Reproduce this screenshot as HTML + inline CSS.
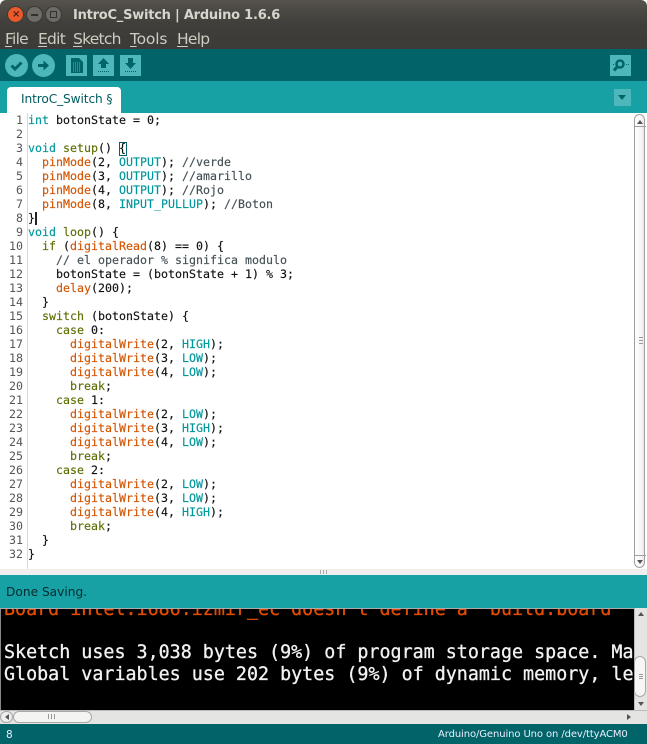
<!DOCTYPE html>
<html><head><meta charset="utf-8"><style>
html,body{margin:0;padding:0;background:#fff}
#p{position:relative;width:647px;height:744px;overflow:hidden;background:#fff}
.a{position:absolute}
.code{position:absolute;left:28px;top:113px;font:11.63px/14px "DejaVu Sans Mono",monospace;color:#111;white-space:pre;margin:0;-webkit-text-stroke:.15px currentColor}
.nums{position:absolute;left:0;top:113px;width:23px;text-align:right;font:11.63px/14px "DejaVu Sans Mono",monospace;color:#555;white-space:pre;margin:0}
.k{color:#00979c}.o{color:#d35400}.t{color:#5e6d03}.c{color:#434f54}
.menu span{position:absolute;top:30px;font:15.5px/18px "DejaVu Sans",sans-serif;color:#cfccc2;letter-spacing:-.75px}
.menu u{text-decoration-thickness:1px;text-underline-offset:2px}
.con{position:absolute;left:4px;font:18.35px/22px "DejaVu Sans Mono",monospace;white-space:pre;color:#f2f2f2;-webkit-text-stroke:.3px currentColor}
</style></head><body><div id="p">
<div class="a" style="left:0;top:0;width:647px;height:49px;background:linear-gradient(#55524b,#3f3e3a 50%,#3c3b37);border-radius:6px 6px 0 0"></div>
<div class="a" style="left:8px;top:7px;width:15px;height:15px;border-radius:50%;background:#e9592c;box-shadow:0 0 0 1px #3a3935"></div>
<div class="a" style="left:12px;top:9px;color:#4a2015;font:bold 10px/11px 'DejaVu Sans',sans-serif">×</div>
<div class="a" style="left:27px;top:7px;width:15px;height:15px;border-radius:50%;background:#6d6b65;box-shadow:0 0 0 1px #3a3935"></div>
<div class="a" style="left:31px;top:14px;width:7px;height:2px;background:#33322f"></div>
<div class="a" style="left:46px;top:7px;width:15px;height:15px;border-radius:50%;background:#6d6b65;box-shadow:0 0 0 1px #3a3935"></div>
<div class="a" style="left:50px;top:11px;width:5px;height:5px;border:1px solid #33322f"></div>
<div class="a" style="left:73px;top:7px;font:bold 13px/17px 'DejaVu Sans',sans-serif;color:#d8d5cc;white-space:pre;letter-spacing:-.23px">IntroC_Switch | Arduino 1.6.6</div>
<div class="menu">
<span style="left:5px"><u>F</u>ile</span><span style="left:38px"><u>E</u>dit</span><span style="left:73px"><u>S</u>ketch</span><span style="left:130px;letter-spacing:-.2px"><u>T</u>ools</span><span style="left:177px"><u>H</u>elp</span>
</div>
<div class="a" style="left:0;top:49px;width:647px;height:32px;background:#006468"></div>
<div class="a" style="left:0;top:81px;width:647px;height:32px;background:#17a1a5"></div>
<svg class="a" style="left:0;top:49px" width="647" height="32" viewBox="0 0 647 32">
<circle cx="16.500" cy="16.500" r="11.500" fill="#4db7bb"/>
<path d="M11.500 16.500l3.500 3.500 6.500-6.500" fill="none" stroke="#006468" stroke-width="3"/>
<circle cx="43.500" cy="16.500" r="11.500" fill="#4db7bb"/>
<path d="M38 15h5.500v-3.500l5.500 5-5.500 5V18H38z" fill="#006468"/>
<rect x="66" y="6" width="21" height="21" fill="#4db7bb"/>
<path d="M71 9h8l4 4v11H71z" fill="#006468"/>
<path d="M73 14h7M73 16h8M73 18h8M73 20h8M73 22h8" stroke="#4db7bb" stroke-dasharray="1 1" stroke-width="1"/>
<rect x="93" y="6" width="21" height="21" fill="#4db7bb"/>
<path d="M103.500 9l5.500 6h-3v4h-5v-4h-3z" fill="#006468"/>
<path d="M98 22.500h11" stroke="#006468" stroke-dasharray="1 1"/>
<rect x="120" y="6" width="21" height="21" fill="#4db7bb"/>
<path d="M128 9h5v5h3l-5.500 6-5.500-6h3z" fill="#006468"/>
<path d="M125 22.500h11" stroke="#006468" stroke-dasharray="1 1"/>
<rect x="610" y="6" width="21" height="21" fill="#4db7bb"/>
<circle cx="620" cy="15" r="3.500" fill="none" stroke="#006468" stroke-width="2.500"/>
<path d="M617 18l-3 3.500" stroke="#006468" stroke-width="3"/>
<path d="M613 15.500h1M626 15.500h1M628 15.500h1" stroke="#006468"/>
</svg>
<div class="a" style="left:7px;top:87px;width:114px;height:26px;background:#fff;border-radius:4px 4px 0 0"></div>
<div class="a" style="left:21px;top:91px;font:12.2px/16px 'DejaVu Sans',sans-serif;color:#005c5f;white-space:pre;letter-spacing:-.12px">IntroC_Switch §</div>
<div class="a" style="left:614px;top:89px;width:17px;height:17px;background:#4db7bb"></div>
<div class="a" style="left:618px;top:95px;width:0;height:0;border:4.500px solid transparent;border-top:5px solid #006468;border-bottom:0"></div>
<div class="a" style="left:27px;top:113px;width:1px;height:456px;background:#d8d8d8"></div>
<pre class="nums">1
2
3
4
5
6
7
8
9
10
11
12
13
14
15
16
17
18
19
20
21
22
23
24
25
26
27
28
29
30
31
32</pre>
<div class="a" style="left:119px;top:142px;width:6px;height:12px;border:1px solid #006468"></div>
<div class="a" style="left:35px;top:212px;width:1px;height:13px;background:#222;box-shadow:1px 0 0 #222"></div>
<pre class="code"><span class="k">int</span> botonState = 0;

<span class="k">void</span> <span class="t">setup</span>() {
  <span class="o">pinMode</span>(2, <span class="k">OUTPUT</span>); <span class="c">//verde</span>
  <span class="o">pinMode</span>(3, <span class="k">OUTPUT</span>); <span class="c">//amarillo</span>
  <span class="o">pinMode</span>(4, <span class="k">OUTPUT</span>); <span class="c">//Rojo</span>
  <span class="o">pinMode</span>(8, <span class="k">INPUT_PULLUP</span>); <span class="c">//Boton</span>
}
<span class="k">void</span> <span class="t">loop</span>() {
  <span class="t">if</span> (<span class="o">digitalRead</span>(8) == 0) {
    <span class="c">// el operador % significa modulo</span>
    botonState = (botonState + 1) % 3;
    <span class="o">delay</span>(200);
  }
  <span class="t">switch</span> (botonState) {
    <span class="t">case</span> 0:
      <span class="o">digitalWrite</span>(2, <span class="k">HIGH</span>);
      <span class="o">digitalWrite</span>(3, <span class="k">LOW</span>);
      <span class="o">digitalWrite</span>(4, <span class="k">LOW</span>);
      <span class="t">break</span>;
    <span class="t">case</span> 1:
      <span class="o">digitalWrite</span>(2, <span class="k">LOW</span>);
      <span class="o">digitalWrite</span>(3, <span class="k">HIGH</span>);
      <span class="o">digitalWrite</span>(4, <span class="k">LOW</span>);
      <span class="t">break</span>;
    <span class="t">case</span> 2:
      <span class="o">digitalWrite</span>(2, <span class="k">LOW</span>);
      <span class="o">digitalWrite</span>(3, <span class="k">LOW</span>);
      <span class="o">digitalWrite</span>(4, <span class="k">HIGH</span>);
      <span class="t">break</span>;
  }
}</pre>
<div class="a" style="left:634px;top:113px;width:13px;height:456px;background:#fff"></div>
<div class="a" style="left:634px;top:114px;width:11px;height:454px;border:1px solid #a0a0a0;border-radius:6px;box-sizing:border-box;background:linear-gradient(90deg,#fff,#f6f6f6 70%,#e6e6e6)"></div>
<div class="a" style="left:637px;top:120px;width:0;height:0;border:3px solid transparent;border-bottom:4px solid #555;border-top:0"></div>
<div class="a" style="left:634px;top:126px;width:12px;height:1px;background:#a0a0a0"></div>
<div class="a" style="left:634px;top:555px;width:12px;height:1px;background:#a0a0a0"></div>
<div class="a" style="left:637px;top:560px;width:0;height:0;border:3px solid transparent;border-top:4px solid #555;border-bottom:0"></div>
<div class="a" style="left:639px;top:337px;width:4px;height:1px;background:#999;box-shadow:0 3px 0 #999,0 6px 0 #999"></div>
<div class="a" style="left:0;top:569px;width:647px;height:6px;background:#f0eeee"></div>
<div class="a" style="left:320px;top:570px;width:1px;height:4px;background:#aaa;box-shadow:3px 0 0 #aaa,6px 0 0 #aaa"></div>
<div class="a" style="left:0;top:575px;width:647px;height:33px;background:#17a1a5"></div>
<div class="a" style="left:6px;top:584px;font:12.2px/16px 'DejaVu Sans',sans-serif;color:#062c2e;white-space:pre">Done Saving.</div>
<div class="a" style="left:0;top:608px;width:634px;height:102px;background:#000;overflow:hidden;border-left:1px solid #888;box-sizing:border-box">
<div class="con" style="left:3px;top:-9px;color:#e34c00">Board intel:i686:izmir_ec doesn't define a 'build.board'</div>
<div class="con" style="left:3px;top:34px">Sketch uses 3,038 bytes (9%) of program storage space. Maximum</div>
<div class="con" style="left:3px;top:56px">Global variables use 202 bytes (9%) of dynamic memory, leaving</div>
</div>
<div class="a" style="left:0;top:608px;width:634px;height:1px;background:#aaa"></div>
<div class="a" style="left:0;top:710px;width:647px;height:14px;background:#e4e4e2;border-top:1px solid #bbb;box-sizing:border-box"></div>
<div class="a" style="left:13px;top:711px;width:79px;height:12px;background:#f4f4f2;border:1px solid #a8a8a8;border-radius:6px;box-sizing:border-box"></div>
<div class="a" style="left:0;top:711px;width:13px;height:12px;background:#eee;border:1px solid #a8a8a8;border-radius:6px;box-sizing:border-box"></div>
<div class="a" style="left:5px;top:714px;width:0;height:0;border:3px solid transparent;border-right:4px solid #555;border-left:0"></div>
<div class="a" style="left:48px;top:714px;width:1px;height:5px;background:#999;box-shadow:3px 0 0 #999,6px 0 0 #999"></div>
<div class="a" style="left:627px;top:714px;width:0;height:0;border:3px solid transparent;border-left:4px solid #555;border-right:0"></div>
<div class="a" style="left:634px;top:608px;width:13px;height:102px;background:#e4e4e2;border-left:1px solid #bbb;box-sizing:border-box"></div>
<div class="a" style="left:634px;top:656px;width:12px;height:41px;background:#f6f6f4;border:1px solid #a8a8a8;border-radius:6px;box-sizing:border-box"></div>
<div class="a" style="left:639px;top:674px;width:4px;height:1px;background:#999;box-shadow:0 2px 0 #999,0 4px 0 #999"></div>
<div class="a" style="left:638px;top:612px;width:0;height:0;border:3px solid transparent;border-bottom:4px solid #555;border-top:0"></div>
<div class="a" style="left:638px;top:702px;width:0;height:0;border:3px solid transparent;border-top:4px solid #555;border-bottom:0"></div>
<div class="a" style="left:0;top:724px;width:647px;height:20px;background:#006468"></div>
<div class="a" style="left:6px;top:728px;font:10.5px/14px 'DejaVu Sans',sans-serif;color:#eef">8</div>
<div class="a" style="left:438px;top:728px;font:10px/14px 'DejaVu Sans',sans-serif;color:#eef;white-space:pre;letter-spacing:-.1px">Arduino/Genuino Uno on /dev/ttyACM0</div>
</div></body></html>
